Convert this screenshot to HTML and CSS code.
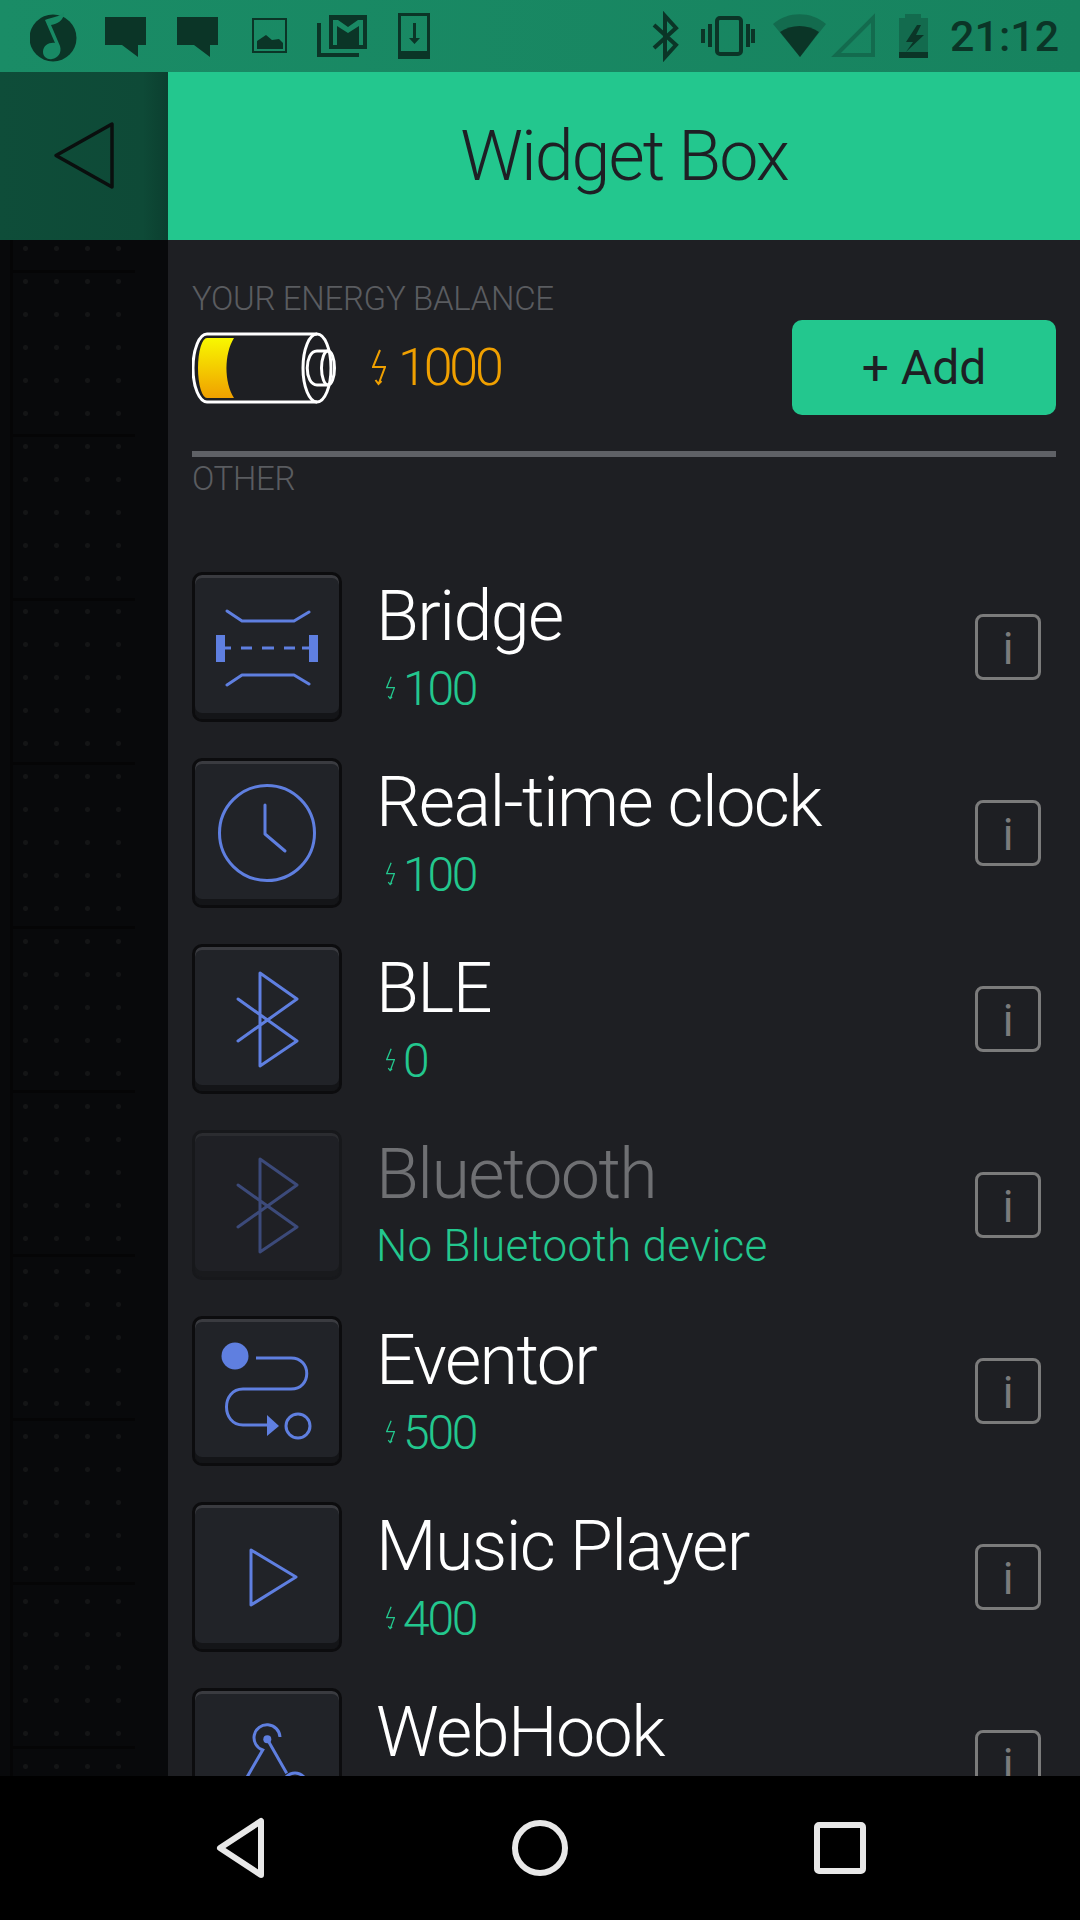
FILE: index.html
```html
<!DOCTYPE html>
<html lang="en">
<head>
    <meta charset="UTF-8">
    <meta name="viewport" content="width=device-width, initial-scale=1.0">
    <title>Widget Box</title>
    <link rel="stylesheet" href="styles.css">
</head>
<body>
    <svg class="defs" width="0" height="0">
        <symbol id="bolt" viewBox="0 0 14 37">
            <path d="M8 1 1 18H13L7 34M3.500 31 6.500 35 9.500 32" fill="none" stroke="currentColor" stroke-width="2"/>
        </symbol>
        <symbol id="bt-glyph" viewBox="0 0 150 150">
            <path d="M46 55 105 97 68 122V29L105 55 46 97" fill="none" stroke="currentColor" stroke-width="3" stroke-linecap="round" stroke-linejoin="round"/>
        </symbol>
    </svg>

    <div class="screen">
        <div class="status">
            <svg class="status-left" viewBox="30 0 400 72" width="400" height="72">
                <g fill="#0b3527">
                    <circle cx="53" cy="38" r="23.500"/>
                    <path d="M105 17H146V45H138V57L122 45H105ZM177 17H218V45H210V57L194 45H177Z"/>
                    <path fill-rule="evenodd" d="M252 18H287V53H252ZM254 20V51H285V20ZM257 49V41L266 35 272 40 279 39 283 43V49Z"/>
                    <path fill-rule="evenodd" d="M329 15H367V49H329ZM333 20V45H337V26L348 33 359 26V45H363V20H358L348 27 338 20Z"/>
                    <rect x="317" y="23" width="4" height="34"/>
                    <rect x="317" y="53" width="42" height="4"/>
                    <path fill-rule="evenodd" d="M398 13H430V59H398ZM401 16V51H427V16Z"/>
                    <path d="M413 23H416V38H420L414.500 44 409 38H413Z"/>
                </g>
                <path d="M64 12C60 17 52 17 45 20L55 43C50 42 43 45 43 52 43 57 48 60 52 59 58 58 62 53 60 46L51 25C57 24 64 21 64 12Z" fill="#188964"/>
            </svg>
            <div class="status-right">
                <svg viewBox="650 0 282 72" width="282" height="72">
                    <path d="M654 25 676 45 665 57V16L676 28 654 48" fill="none" stroke="#0b3527" stroke-width="4"/>
                    <rect x="717" y="18" width="24" height="36" rx="3" fill="none" stroke="#0b3527" stroke-width="4"/>
                    <path d="M708 24H712V47H708ZM701 29H705V43H701ZM746 24H750V47H746ZM751 29H755V43H751Z" fill="#0b3527"/>
                    <path d="M773 24C788 11 811 11 826 24L800 57Z" fill="#136b4e"/>
                    <path d="M780 32C791 24 808 24 819 32L800 57Z" fill="#0b3527"/>
                    <path d="M873 18V55H836Z" fill="none" stroke="#136b4e" stroke-width="4"/>
                    <path d="M905 18V14H921V18H928V58H899V18Z" fill="#136b4e"/>
                    <rect x="899" y="52" width="29" height="6" fill="#0b3527"/>
                    <path d="M917 25 906 42H913L906 52 924 35H916L921 25Z" fill="#0b3527"/>
                </svg>
                <span class="clock">21:12</span>
            </div>
        </div>

        <div class="workspace">
            <div class="back">
                <svg viewBox="0 0 168 168" width="168" height="168">
                    <path d="M112 52V115L56 83.500Z" fill="none" stroke="#0a0f0e" stroke-width="3.500" stroke-linejoin="round"/>
                </svg>
            </div>
            <h1 class="title">Widget Box</h1>
            <div class="canvas"><div class="dots"></div></div>
            <div class="panel">
                <div class="balance-label">YOUR ENERGY BALANCE</div>
                <div class="balance">
                    <svg class="battery" viewBox="0 0 144 72" width="144" height="72">
                        <defs>
                            <linearGradient id="charge" x1="0" y1="0" x2="0" y2="1">
                                <stop offset="0" stop-color="#f8f800"/>
                                <stop offset="1" stop-color="#f0a000"/>
                            </linearGradient>
                        </defs>
                        <path d="M15 6H42C32 22 32 50 42 66H15A9 30 0 0 1 15 6Z" fill="url(#charge)"/>
                        <path d="M125 2H15A14 34 0 0 0 15 70H125" fill="none" stroke="#fff" stroke-width="3"/>
                        <ellipse cx="125" cy="36" rx="14" ry="34" fill="none" stroke="#fff" stroke-width="3"/>
                        <path d="M136 19H125C112 19 112 53 125 53H136" fill="none" stroke="#fff" stroke-width="3"/>
                        <ellipse cx="136" cy="36" rx="6.500" ry="17" fill="none" stroke="#fff" stroke-width="3"/>
                    </svg>
                    <svg class="balance-bolt" width="14" height="37"><use href="#bolt"/></svg>
                    <span class="balance-value">1000</span>
                    <button class="add">+ Add</button>
                </div>
                <div class="section-label">OTHER</div>

                <div class="widgets">
                    <div class="widget">
                        <div class="tile">
                            <svg viewBox="0 0 150 150" width="150" height="150">
                                <path d="M35 39 50 49H102L117 40M35 113 50 103H102L117 112" fill="none" stroke="#5f7fe0" stroke-width="3" stroke-linecap="round" stroke-linejoin="round"/>
                                <path d="M33 76H117" fill="none" stroke="#5f7fe0" stroke-width="3" stroke-dasharray="6 10 11 10 12 10 11 7 7"/>
                                <path d="M24 63H33V90H24ZM117 63H126V90H117Z" fill="#5f7fe0"/>
                            </svg>
                        </div>
                        <div class="info">
                            <div class="name">Bridge</div>
                            <div class="cost"><svg class="cost-bolt" width="9" height="24"><use href="#bolt"/></svg>100</div>
                        </div>
                        <div class="more">i</div>
                    </div>
                    <div class="widget">
                        <div class="tile">
                            <svg viewBox="0 0 150 150" width="150" height="150">
                                <circle cx="75" cy="75" r="47.500" fill="none" stroke="#5f7fe0" stroke-width="3"/>
                                <path d="M73 47V76L93 93" fill="none" stroke="#5f7fe0" stroke-width="3" stroke-linecap="round" stroke-linejoin="round"/>
                            </svg>
                        </div>
                        <div class="info">
                            <div class="name">Real-time clock</div>
                            <div class="cost"><svg class="cost-bolt" width="9" height="24"><use href="#bolt"/></svg>100</div>
                        </div>
                        <div class="more">i</div>
                    </div>
                    <div class="widget">
                        <div class="tile">
                            <svg class="glyph" viewBox="0 0 150 150" width="150" height="150"><use href="#bt-glyph"/></svg>
                        </div>
                        <div class="info">
                            <div class="name">BLE</div>
                            <div class="cost"><svg class="cost-bolt" width="9" height="24"><use href="#bolt"/></svg>0</div>
                        </div>
                        <div class="more">i</div>
                    </div>
                    <div class="widget disabled">
                        <div class="tile">
                            <svg class="glyph" viewBox="0 0 150 150" width="150" height="150"><use href="#bt-glyph"/></svg>
                        </div>
                        <div class="info">
                            <div class="name">Bluetooth</div>
                            <div class="cost note">No Bluetooth device</div>
                        </div>
                        <div class="more">i</div>
                    </div>
                    <div class="widget">
                        <div class="tile">
                            <svg viewBox="0 0 150 150" width="150" height="150">
                                <circle cx="43" cy="40" r="13.500" fill="#5f7fe0"/>
                                <path d="M64 42H99C120 42 120 73 99 73H51C29 73 29 109 51 109H76" fill="none" stroke="#5f7fe0" stroke-width="3"/>
                                <path d="M75 99 87 110 75 120Z" fill="#5f7fe0"/>
                                <circle cx="106" cy="110" r="12" fill="none" stroke="#5f7fe0" stroke-width="3"/>
                            </svg>
                        </div>
                        <div class="info">
                            <div class="name">Eventor</div>
                            <div class="cost"><svg class="cost-bolt" width="9" height="24"><use href="#bolt"/></svg>500</div>
                        </div>
                        <div class="more">i</div>
                    </div>
                    <div class="widget">
                        <div class="tile">
                            <svg viewBox="0 0 150 150" width="150" height="150">
                                <path d="M59 48 104 75 59 103Z" fill="none" stroke="#5f7fe0" stroke-width="3" stroke-linejoin="round"/>
                            </svg>
                        </div>
                        <div class="info">
                            <div class="name">Music Player</div>
                            <div class="cost"><svg class="cost-bolt" width="9" height="24"><use href="#bolt"/></svg>400</div>
                        </div>
                        <div class="more">i</div>
                    </div>
                    <div class="widget">
                        <div class="tile">
                            <svg viewBox="0 0 150 150" width="150" height="150">
                                <path d="M88 49A13 13 0 1 0 70.700 62L43 110M75.300 51.300 94.700 85.300" fill="none" stroke="#5f7fe0" stroke-width="3"/>
                                <circle cx="75.300" cy="51.300" r="4" fill="#5f7fe0"/>
                                <circle cx="103" cy="97" r="12" fill="none" stroke="#5f7fe0" stroke-width="3"/>
                            </svg>
                        </div>
                        <div class="info">
                            <div class="name">WebHook</div>
                            <div class="cost"></div>
                        </div>
                        <div class="more">i</div>
                    </div>
                </div>
            </div>
        </div>

        <div class="nav">
            <svg viewBox="0 0 55 72" width="55" height="72">
                <path d="M48 9V63L7 36Z" fill="none" stroke="#e8e8e8" stroke-width="6" stroke-linejoin="round"/>
            </svg>
            <svg viewBox="0 0 58 58" width="58" height="58">
                <circle cx="29" cy="29" r="25" fill="none" stroke="#e8e8e8" stroke-width="6"/>
            </svg>
            <svg viewBox="0 0 52 52" width="52" height="52">
                <rect x="3" y="3" width="46" height="46" rx="2" fill="none" stroke="#e8e8e8" stroke-width="6"/>
            </svg>
        </div>
    </div>
</body>
</html>
```

FILE: styles.css
```css
* { box-sizing: border-box; }
body { margin: 0; background: #000; font-family: Roboto, "Liberation Sans", sans-serif; }
.defs { position: absolute; }
.screen { width: 1080px; height: 1920px; display: flex; flex-direction: column; overflow: hidden; }

.status { height: 72px; flex: none; display: flex; justify-content: space-between; padding: 0 25px 0 30px; background: linear-gradient(90deg, #1a8c66, #17835f); }
.status svg { display: block; }
.status-right { display: flex; align-items: center; gap: 18px; }
.clock { width: 105px; font-size: 43px; font-weight: 500; color: #0b3527; white-space: nowrap; }

.workspace { flex: 1; min-height: 0; display: grid; grid-template-columns: 168px 1fr; grid-template-rows: 168px 1fr; overflow: hidden; }
.back { background: linear-gradient(90deg, #0e4d39, #0e4a37 85%, #0b3f2f); }
.back svg { display: block; }
.title { margin: 0; background: #23c78e; color: #1e1f24; font-size: 70px; font-weight: 300; letter-spacing: -2px; line-height: 168px; text-align: center; }
.canvas { background: #08090b; padding: 0 33px 0 10px; min-height: 0; overflow: hidden; }
.dots { height: 100%; background-image: linear-gradient(#050506 0, #050506 3px, transparent 3px), linear-gradient(90deg, #050506 0, #050506 3px, transparent 3px), radial-gradient(circle, #141516 0, #141516 2px, transparent 3px); background-size: 125px 164px, 125px 164px, 31px 33px; background-position: 0 30px, 0 30px, 0 25px; }

.panel { background: #1e1f23; padding: 38px 24px 0; min-width: 0; overflow: hidden; }
.balance-label, .section-label { font-size: 33px; font-weight: 300; letter-spacing: -0.3px; line-height: 42px; color: #5a5c60; }
.balance { display: flex; align-items: center; height: 95px; }
.battery { flex: none; }
.balance-bolt { color: #f0a000; margin-left: 36px; flex: none; }
.balance-value { margin-left: 12px; font-size: 52px; font-weight: 300; letter-spacing: -3.2px; color: #f0a000; }
.add { margin-left: auto; width: 264px; height: 95px; border: 0; border-radius: 10px; background: #23c78e; color: #1e1f24; font-family: inherit; font-size: 48px; font-weight: 400; }
.section-label { border-top: 6px solid #5f6166; margin-top: 36px; line-height: 44px; }

.widgets { display: flex; flex-direction: column; gap: 36px; margin-top: 71px; }
.widget { display: flex; align-items: center; height: 150px; flex: none; }
.tile { width: 150px; height: 150px; flex: none; display: flex; align-items: center; justify-content: center; border: 3px solid #0c0c0e; border-radius: 10px; background: #212328; box-shadow: inset 0 3px 0 #3a3b40, inset 0 -6px 0 #141518; }
.tile svg { flex: none; }
.glyph { color: #5f7fe0; }
.info { margin-left: 34px; flex: 1; min-width: 0; }
.name { font-size: 70px; font-weight: 300; letter-spacing: -1.6px; line-height: 77px; margin-bottom: 5px; color: #fff; }
.cost { display: flex; align-items: center; height: 56px; font-size: 48px; font-weight: 300; letter-spacing: -2.2px; color: #23c78e; }
.cost-bolt { margin: 0 8px 0 10px; flex: none; }
.note { font-size: 44px; letter-spacing: 0.3px; }
.more { width: 66px; height: 66px; margin-right: 15px; padding-top: 4px; flex: none; display: flex; align-items: center; justify-content: center; border: 3px solid #7b7b7b; border-radius: 8px; color: #7b7b7b; font-size: 44px; font-weight: 400; }

.disabled .tile { border-color: #17181b; background: #1f2025; box-shadow: inset 0 3px 0 #2b2c30, inset 0 -6px 0 #191a1d; }
.disabled .glyph { color: #3c4a7a; }
.disabled .name { color: #6f7073; }

.nav { height: 144px; flex: none; background: #000; display: grid; grid-template-columns: repeat(3, 300px); padding: 0 90px; align-items: center; justify-items: center; }
.nav svg { display: block; }
```
